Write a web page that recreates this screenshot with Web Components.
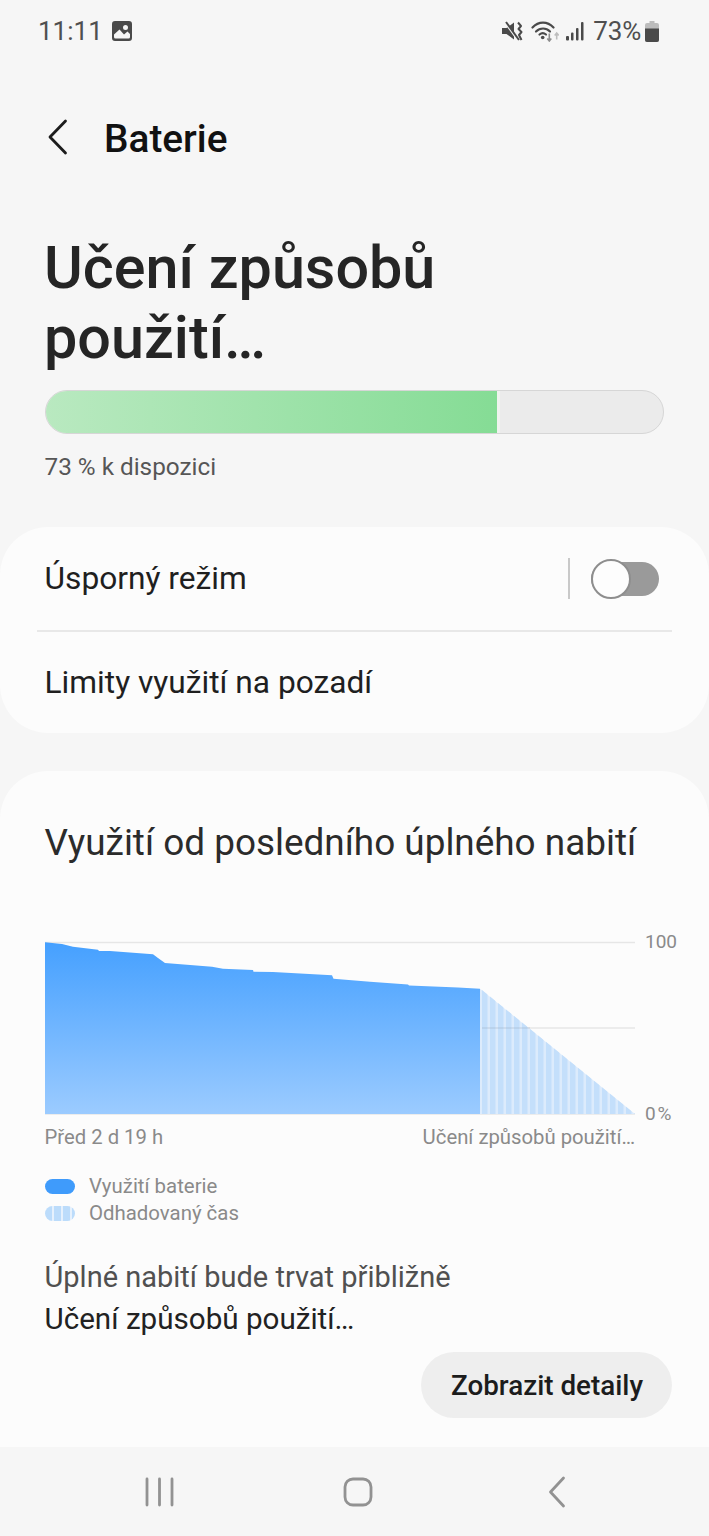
<!DOCTYPE html>
<html lang="cs">
<head>
<meta charset="utf-8">
<title>Baterie</title>
<style>
    html, body { margin: 0; padding: 0; }
    body {
        width: 709px;
        height: 1536px;
        overflow: hidden;
        display: flex;
        flex-direction: column;
        background-color: #f6f6f6;
        color: #252525;
        font-family: Roboto, "Noto Sans", sans-serif;
    }
</style>
</head>
<body>
<status-bar></status-bar>
<app-header>Baterie</app-header>
<battery-summary percent="73">
    <span slot="title">Učení způsobů<br>použití…</span>
    <span slot="caption">73 % k dispozici</span>
</battery-summary>
<settings-card>
    <settings-row toggle>Úsporný režim</settings-row>
    <settings-row>Limity využití na pozadí</settings-row>
</settings-card>
<usage-card>
    <span slot="title">Využití od posledního úplného nabití</span>
    <usage-chart></usage-chart>
    <chart-legend></chart-legend>
    <span slot="label">Úplné nabití bude trvat přibližně</span>
    <span slot="value">Učení způsobů použití…</span>
    <span slot="action">Zobrazit detaily</span>
</usage-card>
<nav-bar></nav-bar>

<script>
class statusBar extends HTMLElement {
    constructor() {
        super();
        this.attachShadow({mode: 'open'});
        this.shadowRoot.innerHTML = `
            <style>
                :host {
                    display: flex;
                    justify-content: space-between;
                    align-items: center;
                    height: 62px;
                    padding: 0 50px 0 38px;
                    color: #4f4f4f;
                    font-size: 26px;
                    flex: none;
                }
                .lado { display: flex; align-items: center; }
                svg { display: block; fill: #4a4a4a; }
                .hora { margin-right: 8px; }
                .pct { margin: 0 4px 0 8px; letter-spacing: -.2px; }
            </style>
            <div class="lado">
                <span class="hora">11:11</span>
                <svg width="22" height="22" viewBox="0 0 22 22">
                    <path fill-rule="evenodd" d="M4 1h14a3 3 0 0 1 3 3v14a3 3 0 0 1-3 3H4a3 3 0 0 1-3-3V4a3 3 0 0 1 3-3zM14.500 5a2.500 2.500 0 1 0 0 5a2.500 2.500 0 0 0 0-5zM3 14.500V17a1.500 1.500 0 0 0 1.500 1.500h13a1.500 1.500 0 0 0 1.500-1.500v-3l-2.500-2.500-3.500 3-4.500-5z"/>
                </svg>
            </div>
            <div class="lado">
                <svg width="24" height="24" viewBox="0 0 24 24" style="margin-right:6px">
                    <path d="M1 9h4.500L13 3.500v17L5.500 15H1z"/>
                    <path d="M3.500 2.500L17 21" stroke="#f6f6f6" stroke-width="2.400"/>
                    <path d="M5 3l13 18" stroke="#4a4a4a" stroke-width="2"/>
                    <path d="M17 3.500l3 3.500-2.500 3 3 3-2.500 3 2.500 5" fill="none" stroke="#4a4a4a" stroke-width="2" stroke-linejoin="round"/>
                </svg>
                <svg width="28" height="22" viewBox="0 0 28 22" style="margin-right:6.500px">
                    <g fill="none" stroke="#4a4a4a" stroke-width="2.200" stroke-linecap="round">
                        <path d="M1.500 7.500c6-6.500 15-6.500 21 0"/>
                        <path d="M5 11.500c4.200-4 10-4 14 0"/>
                        <path d="M8.500 14.500c2-1.600 4.500-1.600 6.500 0"/>
                    </g>
                    <circle cx="11.700" cy="17.500" r="1.800"/>
                    <path d="M18.300 13.500v7.500M16.300 18.500l2 2.500 2-2.500" fill="none" stroke="#8d8d8d" stroke-width="1.600"/>
                    <path d="M25.700 19.500v-6.500M23.700 15.500l2-2.500 2 2.500" fill="none" stroke="#bdbdbd" stroke-width="1.600"/>
                </svg>
                <svg width="20" height="22" viewBox="0 0 20 22">
                    <rect x="1" y="16" width="3" height="4.500" rx="1"/>
                    <rect x="6" y="12.500" width="2.500" height="8" rx="1"/>
                    <rect x="11" y="8" width="2.500" height="12.500" rx="1"/>
                    <rect x="16" y="2" width="2.500" height="18.500" rx="1"/>
                </svg>
                <span class="pct">73%</span>
                <svg width="14" height="22" viewBox="0 0 14 22">
                    <path d="M4.500 1h5v2H12a2 2 0 0 1 2 2v15a2 2 0 0 1-2 2H2a2 2 0 0 1-2-2V5a2 2 0 0 1 2-2h2.500z" fill="#bcbcbc"/>
                    <path d="M0 8.500h14V20a2 2 0 0 1-2 2H2a2 2 0 0 1-2-2z"/>
                </svg>
            </div>
        `;
    }
}

class appHeader extends HTMLElement {
    constructor() {
        super();
        this.attachShadow({mode: 'open'});
        this.shadowRoot.innerHTML = `
            <style>
                :host {
                    display: flex;
                    align-items: center;
                    height: 151px;
                    padding: 1px 0 0 46px;
                    color: #111;
                    font-size: 38.800px;
                    font-weight: 500;
                    flex: none;
                }
                svg { display: block; margin: -4px 35px 0 0; }
            </style>
            <svg width="23" height="36" viewBox="0 0 23 36">
                <path d="M19.500 2L4 18l15.500 16" fill="none" stroke="#1c1c1c" stroke-width="2.800" stroke-linecap="round" stroke-linejoin="round"/>
            </svg>
            <slot></slot>
        `;
    }
}

class batterySummary extends HTMLElement {
    constructor() {
        super();
        this.attachShadow({mode: 'open'});
        this.shadowRoot.innerHTML = `
            <style>
                :host {
                    display: block;
                    padding: 19px 45px 0;
                    height: 299px;
                    box-sizing: border-box;
                    flex: none;
                }
                .titulo {
                    margin-left: -1px;
                    font-size: 59.300px;
                    font-weight: 500;
                    line-height: 70px;
                    color: #252525;
                }
                .barra {
                    display: flex;
                    height: 44px;
                    margin-top: 17px;
                    box-sizing: border-box;
                    border: 1px solid #d6d6d6;
                    border-radius: 22px;
                    overflow: hidden;
                    background-color: #ebebeb;
                }
                .relleno {
                    background: linear-gradient(90deg, #b9e9c0, #85dc95);
                    box-shadow: 3px 0 0 #f0f3ef;
                }
                .pie {
                    margin: 18px 0 0 -.5px;
                    font-size: 24.300px;
                    line-height: 30px;
                    color: #565656;
                }
            </style>
            <div class="titulo"><slot name="title"></slot></div>
            <div class="barra"><div class="relleno" id="relleno"></div></div>
            <div class="pie"><slot name="caption"></slot></div>
        `;
    }

    connectedCallback() {
        this.shadowRoot.getElementById('relleno').style.width = 'calc(' + this.getAttribute('percent') + '% + 1px)';
    }
}

class settingsCard extends HTMLElement {
    constructor() {
        super();
        this.attachShadow({mode: 'open'});
        this.shadowRoot.innerHTML = `
            <style>
                :host {
                    display: flex;
                    flex-direction: column;
                    height: 206px;
                    margin-top: 14px;
                    border-radius: 48px;
                    background-color: #fcfcfc;
                    flex: none;
                }
                ::slotted(settings-row:first-child) {
                    flex: none;
                    height: 103px;
                    border-bottom: 2px solid #e8e8e8;
                }
            </style>
            <slot></slot>
        `;
    }
}

class settingsRow extends HTMLElement {
    constructor() {
        super();
        this.attachShadow({mode: 'open'});
        this.shadowRoot.innerHTML = `
            <style>
                :host {
                    display: flex;
                    justify-content: space-between;
                    align-items: center;
                    flex: 1;
                    margin: 0 37px;
                    padding: 0 13px 0 7.500px;
                    font-size: 31.700px;
                    color: #1f1f1f;
                }
                .control { display: flex; align-items: center; }
                .sep { width: 2px; height: 41px; margin-right: 21px; background-color: #c9c9c9; }
                .switch { position: relative; width: 68px; height: 34px; border-radius: 17px; background-color: #9a9a9a; }
                .perilla {
                    position: absolute;
                    left: 0;
                    top: -3px;
                    width: 40px;
                    height: 40px;
                    box-sizing: border-box;
                    border: 2px solid #8e8e8e;
                    border-radius: 50%;
                    background-color: #fdfdfd;
                }
            </style>
            <slot></slot>
            <div class="control" id="control">
                <div class="sep"></div>
                <div class="switch"><div class="perilla"></div></div>
            </div>
        `;
    }

    connectedCallback() {
        let control = this.shadowRoot.getElementById('control');
        if (!this.hasAttribute('toggle')) control.remove();
    }
}

class usageCard extends HTMLElement {
    constructor() {
        super();
        this.attachShadow({mode: 'open'});
        this.shadowRoot.innerHTML = `
            <style>
                :host {
                    display: block;
                    height: 676px;
                    margin-top: 38px;
                    padding: 50px 37px 0 45px;
                    box-sizing: border-box;
                    border-radius: 48px 48px 0 0;
                    background-color: #fcfcfc;
                    flex: none;
                }
                .titulo { margin-left: -.5px; font-size: 36.900px; line-height: 44px; color: #2b2b2b; margin-bottom: 76px; white-space: nowrap; }
                .etiqueta { margin: 30px 0 0 -.5px; font-size: 29px; line-height: 40px; color: #505050; }
                .valor { margin-left: -.5px; font-size: 29.600px; line-height: 44px; color: #222; }
                .fila { display: flex; justify-content: flex-end; margin-top: 11px; }
                .boton {
                    display: flex;
                    align-items: center;
                    height: 66px;
                    padding: 0 29px 0 30px;
                    border-radius: 33px;
                    background-color: #eeeeee;
                    font-size: 27.800px;
                    font-weight: 500;
                    color: #1c1c1c;
                }
            </style>
            <div class="titulo"><slot name="title"></slot></div>
            <slot></slot>
            <div class="etiqueta"><slot name="label"></slot></div>
            <div class="valor"><slot name="value"></slot></div>
            <div class="fila"><div class="boton"><slot name="action"></slot></div></div>
        `;
    }
}

class usageChart extends HTMLElement {
    constructor() {
        super();
        this.attachShadow({mode: 'open'});
        this.shadowRoot.innerHTML = `
            <style>
                :host {
                    display: grid;
                    grid-template-columns: 590px auto;
                    column-gap: 10px;
                    color: #8a8a8a;
                    font-size: 19px;
                }
                svg { display: block; grid-row: 1; grid-column: 1; }
                .escala {
                    display: flex;
                    flex-direction: column;
                    justify-content: space-between;
                    height: 192px;
                    margin: -9px 0 -18px 0;
                    line-height: 20px;
                    white-space: nowrap;
                    word-spacing: -3px;
                }
                .ejes {
                    grid-column: 1;
                    display: flex;
                    justify-content: space-between;
                    margin: 9px 0 0 -.5px;
                    font-size: 20.300px;
                    line-height: 26px;
                    white-space: nowrap;
                }
            </style>
            <svg width="590" height="174" viewBox="45 941 590 174">
                <defs>
                    <linearGradient id="azul" x1="0" y1="0" x2="0" y2="1">
                        <stop offset="0" stop-color="#45a0ff"/>
                        <stop offset="1" stop-color="#9bcbff"/>
                    </linearGradient>
                    <pattern id="rayas" x="482" y="0" width="8" height="10" patternUnits="userSpaceOnUse">
                        <rect width="5.500" height="10" fill="#c4dffb"/>
                    </pattern>
                </defs>
                <path d="M45 942.500H635M45 1028H635M45 1114H635" fill="none" stroke="#e6e6e6" stroke-width="1.500"/>
                <path fill="url(#azul)" d="M45 942.300L62 944L73 946.700L98 949.700L99 951L110 951L153 954.300L158 958L165 963L212 966.700L223 968.700L253 970L253.500 971.700L273 972L332 975.300L333.500 978.700L370 981.700L408 984.500L409 985.500L458 987.500L480 988.700V1114H45z"/>
                <path fill="#dcebfc" d="M480 988.700L635 1114H480z"/>
                <path fill="url(#rayas)" d="M482 990L635 1114H482z"/>
                <path d="M482 1028H530" fill="none" stroke="#8a9bb0" stroke-opacity=".25" stroke-width="1.500"/>
            </svg>
            <div class="escala"><span>100</span><span>0 %</span></div>
            <div class="ejes"><span>Před 2 d 19 h</span><span>Učení způsobů použití…</span></div>
        `;
    }
}

class chartLegend extends HTMLElement {
    constructor() {
        super();
        this.attachShadow({mode: 'open'});
        this.shadowRoot.innerHTML = `
            <style>
                :host {
                    display: grid;
                    grid-template-columns: 30px auto;
                    column-gap: 14px;
                    align-items: center;
                    justify-content: start;
                    margin-top: 23px;
                    color: #8a8a8a;
                    font-size: 20.400px;
                    line-height: 27px;
                }
                .marca { width: 30px; height: 15px; border-radius: 8px; background-color: #3f9bfb; }
                .estimado { background: repeating-linear-gradient(90deg, #bcdcfb 0 7px, #e6f1fd 7px 9px); }
            </style>
            <div class="marca"></div><span>Využití baterie</span>
            <div class="marca estimado"></div><span>Odhadovaný čas</span>
        `;
    }
}

class navBar extends HTMLElement {
    constructor() {
        super();
        this.attachShadow({mode: 'open'});
        this.shadowRoot.innerHTML = `
            <style>
                :host {
                    display: grid;
                    grid-template-columns: 318px 80px 1fr;
                    align-items: center;
                    height: 88px;
                    padding-top: 1px;
                    flex: none;
                }
                svg { display: block; }
            </style>
            <svg width="30" height="30" viewBox="0 0 30 30" style="margin-left:145px">
                <path d="M2 2v26M14.500 2v26M27 2v26" fill="none" stroke="#929292" stroke-width="2.800" stroke-linecap="round"/>
            </svg>
            <svg width="32" height="32" viewBox="0 0 32 32" style="margin-left:24px">
                <rect x="3" y="3" width="26" height="26" rx="8" fill="none" stroke="#929292" stroke-width="2.800"/>
            </svg>
            <svg width="20" height="32" viewBox="0 0 20 32" style="margin-left:149px">
                <path d="M16.500 2L3.500 16l13 14" fill="none" stroke="#929292" stroke-width="2.800" stroke-linecap="round" stroke-linejoin="round"/>
            </svg>
        `;
    }
}

window.customElements.define("status-bar", statusBar);
window.customElements.define("app-header", appHeader);
window.customElements.define("battery-summary", batterySummary);
window.customElements.define("settings-card", settingsCard);
window.customElements.define("settings-row", settingsRow);
window.customElements.define("usage-card", usageCard);
window.customElements.define("usage-chart", usageChart);
window.customElements.define("chart-legend", chartLegend);
window.customElements.define("nav-bar", navBar);
</script>
</body>
</html>
